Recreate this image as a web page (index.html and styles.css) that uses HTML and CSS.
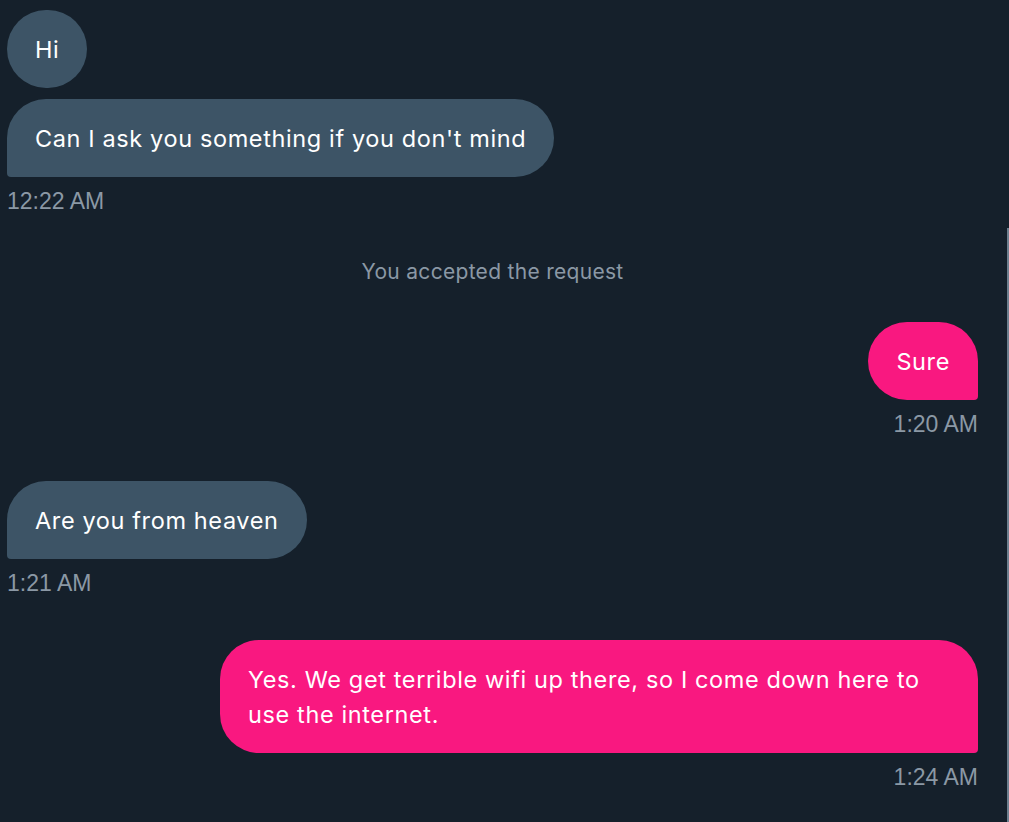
FILE: index.html
```html
<!DOCTYPE html>
<html>
<head>
<meta charset="utf-8">
<link rel="stylesheet" href="styles.css">
</head>
<body>
<div class="chat">
  <div class="group incoming">
    <div class="bubble recv round">Hi</div>
    <div class="bubble recv tail-left">Can I ask you something if you don't mind</div>
    <div class="time">12:22 AM</div>
  </div>
  <div class="system">You accepted the request</div>
  <div class="group outgoing first-out">
    <div class="bubble sent tail-right">Sure</div>
    <div class="time">1:20 AM</div>
  </div>
  <div class="group incoming after">
    <div class="bubble recv tail-left">Are you from heaven</div>
    <div class="time">1:21 AM</div>
  </div>
  <div class="group outgoing after">
    <div class="bubble sent tail-right">Yes. We get terrible wifi up there, so I come down here to use the internet.</div>
    <div class="time">1:24 AM</div>
  </div>
</div>
<div class="scrollbar"></div>
</body>
</html>
```

FILE: styles.css
```css
html, body {
  margin: 0;
  padding: 0;
  background: #15202b;
  height: 100%;
  overflow: hidden;
}
body {
  position: relative;
}
.chat {
  padding: 10px 31px 0 7px;
  display: flex;
  flex-direction: column;
}
.group {
  display: flex;
  flex-direction: column;
  gap: 11px;
}
.incoming { align-items: flex-start; }
.outgoing { align-items: flex-end; }
.first-out { margin-top: 38px; }
.after { margin-top: 45px; }
.bubble {
  font-family: "Inter", "Noto Sans", sans-serif;
  font-size: 23.5px;
  letter-spacing: 0.62px;
  line-height: 35px;
  color: #ffffff;
  padding: 21.5px 28px;
  border-radius: 39px;
  max-width: 702px;
  box-sizing: content-box;
}
.recv { background: #3d5466; }
.sent { background: #f91880; }
.tail-left { border-bottom-left-radius: 4px; }
.tail-right { border-bottom-right-radius: 4px; }
.time {
  font-family: "Liberation Sans", Arial, sans-serif;
  font-size: 23px;
  line-height: 24px;
  color: #8b98a5;
  margin-top: 1px;
}
.system {
  margin-top: 47px;
  text-align: center;
  font-family: "Inter", "Noto Sans", sans-serif;
  font-size: 21px;
  letter-spacing: 0.3px;
  line-height: 24px;
  color: #8b98a5;
}
.scrollbar {
  position: absolute;
  right: 0;
  top: 228px;
  bottom: 0;
  width: 2px;
  background: #6e7f8f;
}
```
